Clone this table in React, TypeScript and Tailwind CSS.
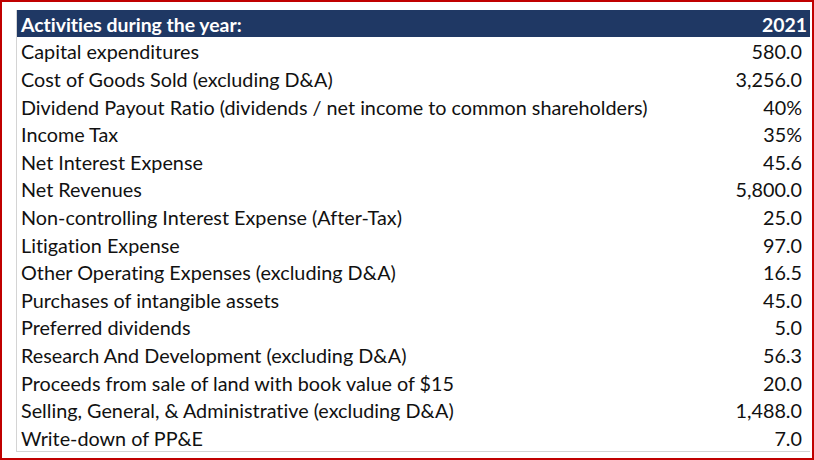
const rows: [string, string][] = [
  ["Capital expenditures", "580.0"],
  ["Cost of Goods Sold (excluding D&A)", "3,256.0"],
  ["Dividend Payout Ratio (dividends / net income to common shareholders)", "40%"],
  ["Income Tax", "35%"],
  ["Net Interest Expense", "45.6"],
  ["Net Revenues", "5,800.0"],
  ["Non-controlling Interest Expense (After-Tax)", "25.0"],
  ["Litigation Expense", "97.0"],
  ["Other Operating Expenses (excluding D&A)", "16.5"],
  ["Purchases of intangible assets", "45.0"],
  ["Preferred dividends", "5.0"],
  ["Research And Development (excluding D&A)", "56.3"],
  ["Proceeds from sale of land with book value of $15", "20.0"],
  ["Selling, General, & Administrative (excluding D&A)", "1,488.0"],
  ["Write-down of PP&E", "7.0"],
];

export default function App() {
  return (
    <div className="w-[814px] h-[460px] border-2 border-[#c00000] bg-white font-['Lato','Liberation_Sans',sans-serif] text-[#111] text-[19.8px] leading-none [font-variant-ligatures:none]">
      <div className="ml-[14px] mt-[8px] w-[794px] border-l border-b border-[#d4d4d4]">
        <div className="flex h-[27px] items-center justify-between bg-[#1f3864] pl-[4px] pr-[3px] pt-[2px] text-[19.4px] font-bold text-white">
          <span>Activities during the year:</span>
          <span>2021</span>
        </div>
        {rows.map(([label, value]) => (
          <div key={label} className="flex h-[27.6px] items-center justify-between pl-[4px] pr-[8px] pt-[3px]">
            <span>{label}</span>
            <span>{value}</span>
          </div>
        ))}
      </div>
    </div>
  );
}
